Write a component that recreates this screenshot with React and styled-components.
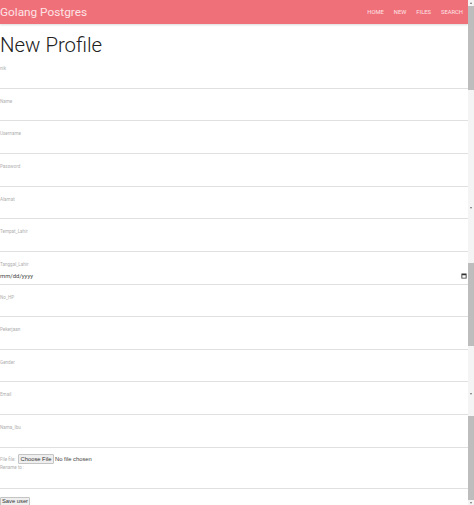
import React from 'react';
import styled, { createGlobalStyle } from 'styled-components';

const GlobalStyle = createGlobalStyle`
  html, body {
    margin: 0;
    padding: 0;
    height: 505px;
    overflow: hidden;
    background: #fff;
    font-family: Roboto, sans-serif;
  }
`;

const Page = styled.div`
  display: flex;
  width: 474px;
  height: 505px;
  overflow: hidden;
`;

const Main = styled.div`
  flex: 1;
  min-width: 0;
`;

const Navbar = styled.nav`
  display: flex;
  align-items: center;
  justify-content: space-between;
  height: 24px;
  background: #f0707a;
  box-shadow: 0 1px 2px rgba(0, 0, 0, 0.15);
  color: #fff;
`;

const Brand = styled.a`
  font-size: 11.8px;
  line-height: 24px;
  color: #fde3e5;
`;

const NavLinks = styled.ul`
  display: flex;
  gap: 10px;
  margin: 0;
  padding: 0 5px 0 0;
  list-style: none;
  font-size: 5.8px;
  color: #fde3e5;
`;

const Title = styled.h1`
  box-sizing: border-box;
  margin: 0;
  padding-top: 7px;
  height: 32.2px;
  font-size: 20.4px;
  line-height: 28px;
  font-weight: 300;
  color: #212121;
`;

const Form = styled.form`
  display: flex;
  flex-direction: column;
`;

const Field = styled.div`
  height: 32.64px;
  box-sizing: border-box;
  border-bottom: 1px solid #e0e0e0;
`;

const Label = styled.label`
  display: block;
  padding-top: 10px;
  font-size: 4.6px;
  line-height: 6px;
  color: #b0b0b0;
`;

const DateRow = styled.div`
  display: flex;
  align-items: center;
  justify-content: space-between;
  height: 11px;
  margin-top: 3px;
  font-size: 5.9px;
  color: #444;
`;

const FileRow = styled.div`
  display: flex;
  align-items: center;
  gap: 1px;
  height: 10px;
  margin-top: 6.5px;
  font-size: 5.8px;
  color: #444;
`;

const FileLabel = styled.span`
  width: 17px;
  font-size: 4.6px;
  color: #b0b0b0;
`;

const ChooseButton = styled.button`
  height: 10px;
  width: 36px;
  padding: 0;
  margin: 0;
  border: 1px solid #c4c4c4;
  border-radius: 1px;
  background: #efefef;
  color: #333;
  font-size: 5.8px;
  line-height: 7px;
  font-family: 'Liberation Sans', sans-serif;
`;

const FileName = styled.span`
  font-family: 'Liberation Sans', sans-serif;
`;

const RenameField = styled.div`
  height: 24.5px;
  box-sizing: border-box;
  border-bottom: 1px solid #e0e0e0;
  padding-top: 1px;
`;

const RenameLabel = styled.label`
  display: block;
  font-size: 4.6px;
  line-height: 6px;
  color: #b0b0b0;
`;

const SaveButton = styled.button`
  align-self: flex-start;
  flex: none;
  width: 30px;
  height: 10px;
  margin: 8px 0 0;
  padding: 0;
  border: 1px solid #c4c4c4;
  border-radius: 1px;
  background: #efefef;
  color: #333;
  font-size: 5.8px;
  line-height: 7px;
  font-family: 'Liberation Sans', sans-serif;
`;

const Rail = styled.div`
  display: flex;
  flex-direction: column;
  width: 6px;
  height: 505px;
  flex: none;
`;

const Track = styled.div`
  display: flex;
  flex-direction: column;
  height: ${(p) => p.$height}px;
  background: #f4f4f4;
`;

const Arrow = styled.div`
  display: flex;
  align-items: center;
  justify-content: center;
  height: 6px;
  flex: none;

  &::before {
    content: '';
    border-left: 1.5px solid transparent;
    border-right: 1.5px solid transparent;
    ${(p) => (p.$down ? 'border-top' : 'border-bottom')}: 2px solid #707070;
  }
`;

const Gap = styled.div`
  flex: ${(p) => (p.$grow ? 1 : 'none')};
  height: ${(p) => (p.$grow ? 'auto' : `${p.$height}px`)};
`;

const Thumb = styled.div`
  height: ${(p) => p.$height}px;
  flex: none;
  background: #bdbdbd;
`;

const fieldNames = ['nik', 'Name', 'Username', 'Password', 'Alamat', 'Tempat_Lahir'];
const moreNames = ['No_HP', 'Pekerjaan', 'Gender', 'Email', 'Nama_Ibu'];

const CalendarIcon = () => (
  <svg width="6" height="6" viewBox="0 0 14 14" aria-hidden="true" style={{ marginRight: 1 }}>
    <path d="M1 1h12v12H1z M3 5h8v6H3z" fill="#333" fillRule="evenodd" />
  </svg>
);

const App = () => (
  <Page>
    <GlobalStyle />
    <Main>
      <Navbar>
        <Brand>Golang Postgres</Brand>
        <NavLinks>
          <li>HOME</li>
          <li>NEW</li>
          <li>FILES</li>
          <li>SEARCH</li>
        </NavLinks>
      </Navbar>
      <Title>New Profile</Title>
      <Form>
        {fieldNames.map((name) => (
          <Field key={name}>
            <Label>{name}</Label>
          </Field>
        ))}
        <Field>
          <Label>Tanggal_Lahir</Label>
          <DateRow>
            <span>mm/dd/yyyy</span>
            <CalendarIcon />
          </DateRow>
        </Field>
        {moreNames.map((name) => (
          <Field key={name}>
            <Label>{name}</Label>
          </Field>
        ))}
        <FileRow>
          <FileLabel>File file:</FileLabel>
          <ChooseButton type="button">Choose File</ChooseButton>
          <FileName>No file chosen</FileName>
        </FileRow>
        <RenameField>
          <RenameLabel>Rename to :</RenameLabel>
        </RenameField>
        <SaveButton type="button">Save user</SaveButton>
      </Form>
    </Main>
    <Rail>
      <Track $height={211}>
        <Arrow />
        <Thumb $height={84} />
        <Gap $grow />
        <Arrow $down />
      </Track>
      <Track $height={186}>
        <Gap $height={52} />
        <Thumb $height={83} />
        <Gap $grow />
        <Arrow $down />
      </Track>
      <Track $height={108}>
        <Gap $height={19} />
        <Thumb $height={84} />
        <Gap $grow />
        <Arrow $down />
      </Track>
    </Rail>
  </Page>
);

export default App;
